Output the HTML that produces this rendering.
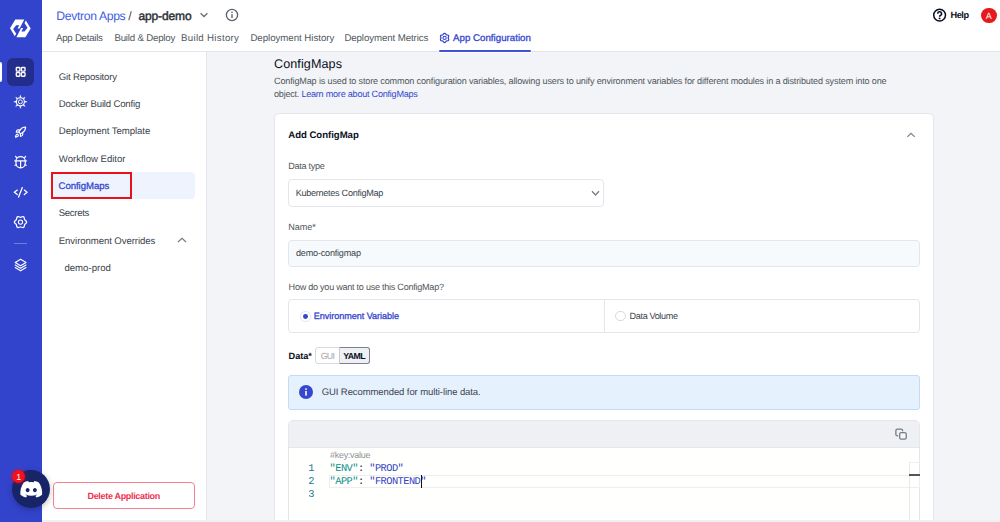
<!DOCTYPE html><html><head><meta charset="utf-8"><style>
html,body{margin:0;padding:0;width:1000px;height:522px;overflow:hidden;background:#f2f4f7;font-family:'Liberation Sans',sans-serif;text-rendering:geometricPrecision;}
.t{position:absolute;white-space:nowrap;}
.b{position:absolute;box-sizing:border-box;}
svg{position:absolute;overflow:visible;}
</style></head><body>
<div class="b" style="left:42px;top:0px;width:958.00px;height:522.00px;background:#f2f4f7"></div>
<div class="b" style="left:42px;top:0px;width:958.00px;height:51.00px;background:#fff"></div>
<div class="b" style="left:42px;top:51px;width:958.00px;height:1.00px;background:#e3e6ea"></div>
<div class="b" style="left:42px;top:52px;width:164.00px;height:468.00px;background:#fff"></div>
<div class="b" style="left:206px;top:52px;width:1.00px;height:468.00px;background:#e3e6ea"></div>
<div class="b" style="left:0px;top:0px;width:42.20px;height:522.00px;background:#3344cc"></div>
<div class="t" style="left:56.30px;top:10px;font-size:12.2px;line-height:12.2px;color:#3f5ee2;font-weight:400;font-family:'Liberation Sans', sans-serif;letter-spacing:-0.341px;">Devtron Apps</div>
<div class="t" style="left:128.20px;top:10px;font-size:12.2px;line-height:12.2px;color:#3b444c;font-weight:400;font-family:'Liberation Sans', sans-serif;">/</div>
<div class="t" style="left:138.40px;top:10px;font-size:12px;line-height:12px;color:#2c2f36;font-weight:400;font-family:'Liberation Sans', sans-serif;letter-spacing:-0.121px;-webkit-text-stroke:0.45px #2c2f36;">app-demo</div>
<svg style="left:200px;top:12px" width="8" height="6" viewBox="0 0 8 6"><path d="M0.6 1.2 L4 4.6 L7.4 1.2" fill="none" stroke="#6b7178" stroke-width="1.35"/></svg>
<svg style="left:225px;top:8px" width="14" height="14" viewBox="0 0 14 14"><circle cx="7" cy="7" r="5.6" fill="none" stroke="#5b6168" stroke-width="1.3"/><path d="M7 6.3 V10" stroke="#5b6168" stroke-width="1.4"/><circle cx="7" cy="4.3" r="0.8" fill="#5b6168"/></svg>
<div class="t" style="left:56.00px;top:34px;font-size:9.7px;line-height:9.7px;color:#51575d;font-weight:400;font-family:'Liberation Sans', sans-serif;letter-spacing:-0.260px;">App Details</div>
<div class="t" style="left:114.40px;top:34px;font-size:9.7px;line-height:9.7px;color:#51575d;font-weight:400;font-family:'Liberation Sans', sans-serif;letter-spacing:-0.200px;">Build &amp; Deploy</div>
<div class="t" style="left:181.00px;top:34px;font-size:9.7px;line-height:9.7px;color:#51575d;font-weight:400;font-family:'Liberation Sans', sans-serif;letter-spacing:0.296px;">Build History</div>
<div class="t" style="left:250.40px;top:34px;font-size:9.7px;line-height:9.7px;color:#51575d;font-weight:400;font-family:'Liberation Sans', sans-serif;letter-spacing:-0.038px;">Deployment History</div>
<div class="t" style="left:344.40px;top:34px;font-size:9.7px;line-height:9.7px;color:#51575d;font-weight:400;font-family:'Liberation Sans', sans-serif;letter-spacing:-0.100px;">Deployment Metrics</div>
<div class="t" style="left:453.00px;top:34px;font-size:9.7px;line-height:9.7px;color:#3647cf;font-weight:400;font-family:'Liberation Sans', sans-serif;letter-spacing:0.022px;-webkit-text-stroke:0.3px #3647cf;">App Configuration</div>
<svg style="left:0;top:0" width="460" height="50" viewBox="0 0 460 50"><path d="M448.15 37.90 L448.24 38.28 L448.44 38.72 L448.66 39.22 L448.75 39.75 L448.63 40.22 L448.28 40.57 L447.77 40.76 L447.23 40.82 L446.75 40.86 L446.38 40.97 L446.09 41.24 L445.81 41.64 L445.49 42.08 L445.08 42.42 L444.60 42.55 L444.12 42.42 L443.71 42.08 L443.39 41.64 L443.11 41.24 L442.83 40.97 L442.45 40.86 L441.97 40.82 L441.43 40.76 L440.92 40.57 L440.57 40.22 L440.45 39.75 L440.54 39.22 L440.76 38.72 L440.96 38.28 L441.05 37.90 L440.96 37.52 L440.76 37.08 L440.54 36.58 L440.45 36.05 L440.57 35.57 L440.92 35.23 L441.43 35.04 L441.97 34.98 L442.45 34.94 L442.83 34.83 L443.11 34.56 L443.39 34.16 L443.71 33.72 L444.12 33.38 L444.60 33.25 L445.08 33.38 L445.49 33.72 L445.81 34.16 L446.09 34.56 L446.38 34.83 L446.75 34.94 L447.23 34.98 L447.77 35.04 L448.28 35.23 L448.63 35.57 L448.75 36.05 L448.66 36.58 L448.44 37.08 L448.24 37.52 Z" fill="none" stroke="#3647cf" stroke-width="1.2" stroke-linejoin="round"/><circle cx="444.6" cy="37.9" r="1.6" fill="none" stroke="#3647cf" stroke-width="1.1"/></svg>
<div class="b" style="left:439px;top:52px;width:92.30px;height:1.00px;background:#fff"></div>
<div class="b" style="left:439px;top:49.8px;width:92.30px;height:2.00px;background:#4153d8;border-radius:1px"></div>
<svg style="left:932px;top:8px" width="15" height="15" viewBox="0 0 15 15"><circle cx="7.6" cy="7.1" r="5.9" fill="none" stroke="#0b0f22" stroke-width="1.5"/><path d="M5.7 5.7 a1.95 1.95 0 1 1 2.7 1.8 c-.55 .3 -.8 .6 -.8 1.2" fill="none" stroke="#0b0f22" stroke-width="1.6"/><circle cx="7.6" cy="10.4" r="0.95" fill="#0b0f22"/></svg>
<div class="t" style="left:950.40px;top:11px;font-size:9.2px;line-height:9.2px;color:#0b0f22;font-weight:700;font-family:'Liberation Sans', sans-serif;letter-spacing:-0.383px;">Help</div>
<div class="b" style="left:981.2px;top:7.9px;width:15.60px;height:15.60px;background:#e6191b;border-radius:50%"></div>
<div class="t" style="left:985.80px;top:12px;font-size:9px;line-height:9px;color:#fff;font-weight:400;font-family:'Liberation Sans', sans-serif;">A</div>
<div class="b" style="left:51.5px;top:172.2px;width:143.50px;height:27.10px;background:#eef3fe;border-radius:4px"></div>
<div class="t" style="left:58.80px;top:73px;font-size:9.6px;line-height:9.6px;color:#3b444c;font-weight:400;font-family:'Liberation Sans', sans-serif;letter-spacing:-0.200px;">Git Repository</div>
<div class="t" style="left:58.80px;top:100px;font-size:9.6px;line-height:9.6px;color:#3b444c;font-weight:400;font-family:'Liberation Sans', sans-serif;letter-spacing:-0.186px;">Docker Build Config</div>
<div class="t" style="left:58.80px;top:127px;font-size:9.6px;line-height:9.6px;color:#3b444c;font-weight:400;font-family:'Liberation Sans', sans-serif;letter-spacing:-0.064px;">Deployment Template</div>
<div class="t" style="left:58.80px;top:155px;font-size:9.6px;line-height:9.6px;color:#3b444c;font-weight:400;font-family:'Liberation Sans', sans-serif;letter-spacing:-0.025px;">Workflow Editor</div>
<div class="t" style="left:58.60px;top:182px;font-size:9.6px;line-height:9.6px;color:#3647cf;font-weight:400;font-family:'Liberation Sans', sans-serif;letter-spacing:-0.061px;-webkit-text-stroke:0.3px #3647cf;">ConfigMaps</div>
<div class="t" style="left:58.80px;top:209px;font-size:9.6px;line-height:9.6px;color:#3b444c;font-weight:400;font-family:'Liberation Sans', sans-serif;letter-spacing:-0.342px;">Secrets</div>
<div class="t" style="left:58.80px;top:237px;font-size:9.6px;line-height:9.6px;color:#3b444c;font-weight:400;font-family:'Liberation Sans', sans-serif;letter-spacing:-0.083px;">Environment Overrides</div>
<div class="t" style="left:64.40px;top:264px;font-size:9.6px;line-height:9.6px;color:#3b444c;font-weight:400;font-family:'Liberation Sans', sans-serif;letter-spacing:0.019px;">demo-prod</div>
<div class="b" style="left:50.7px;top:172.2px;width:81.00px;height:27.10px;border:2px solid #e8121b"></div>
<svg style="left:176.5px;top:237px" width="10" height="6" viewBox="0 0 10 6"><path d="M1 5 L5 1.3 L9 5" fill="none" stroke="#767d84" stroke-width="1.2"/></svg>
<div class="b" style="left:53.2px;top:481.5px;width:141.80px;height:27.20px;border:1.3px solid #f7808f;border-radius:4px;background:#fff"></div>
<div class="t" style="left:87.50px;top:492px;font-size:9px;line-height:9px;color:#f0304f;font-weight:700;font-family:'Liberation Sans', sans-serif;letter-spacing:-0.318px;">Delete Application</div>
<div class="t" style="left:274.00px;top:58px;font-size:12.6px;line-height:12.6px;color:#0b0f22;font-weight:400;font-family:'Liberation Sans', sans-serif;letter-spacing:0.083px;">ConfigMaps</div>
<div class="t" style="left:274.00px;top:77px;font-size:9.1px;line-height:9.1px;color:#51575d;font-weight:400;font-family:'Liberation Sans', sans-serif;letter-spacing:-0.162px;">ConfigMap is used to store common configuration variables, allowing users to unify environment variables for different modules in a distributed system into one</div>
<div class="t" style="left:274.00px;top:90px;font-size:9.1px;line-height:9.1px;color:#51575d;font-weight:400;font-family:'Liberation Sans', sans-serif;letter-spacing:-0.243px;">object. <span style="color:#3647cf">Learn more about ConfigMaps</span></div>
<div class="b" style="left:274px;top:113.2px;width:659.50px;height:426.80px;background:#fff;border:1px solid #e3e6ea;border-radius:5px"></div>
<div class="t" style="left:288.30px;top:131px;font-size:9.6px;line-height:9.6px;color:#0b0f22;font-weight:700;font-family:'Liberation Sans', sans-serif;letter-spacing:-0.033px;">Add ConfigMap</div>
<svg style="left:906.2px;top:131.8px" width="10" height="6" viewBox="0 0 10 6"><path d="M1.3 4.9 L5 1.3 L8.7 4.9" fill="none" stroke="#7d8186" stroke-width="1.2"/></svg>
<div class="t" style="left:288.20px;top:162px;font-size:9.1px;line-height:9.1px;color:#51575d;font-weight:400;font-family:'Liberation Sans', sans-serif;letter-spacing:-0.281px;">Data type</div>
<div class="b" style="left:288px;top:179px;width:315.80px;height:28.30px;background:#fff;border:1px solid #e3e6ea;border-radius:4px"></div>
<div class="t" style="left:295.70px;top:189px;font-size:9.1px;line-height:9.1px;color:#3b444c;font-weight:400;font-family:'Liberation Sans', sans-serif;letter-spacing:-0.284px;">Kubernetes ConfigMap</div>
<svg style="left:590.5px;top:190px" width="9" height="6" viewBox="0 0 9 6"><path d="M1 1.2 L4.5 5 L8 1.2" fill="none" stroke="#767d84" stroke-width="1.3"/></svg>
<div class="t" style="left:288.20px;top:223px;font-size:9.1px;line-height:9.1px;color:#51575d;font-weight:400;font-family:'Liberation Sans', sans-serif;letter-spacing:-0.025px;">Name*</div>
<div class="b" style="left:288px;top:240px;width:631.70px;height:27.00px;background:#f7fafc;border:1px solid #e3e6ea;border-radius:4px"></div>
<div class="t" style="left:296.00px;top:249px;font-size:9.1px;line-height:9.1px;color:#3b444c;font-weight:400;font-family:'Liberation Sans', sans-serif;letter-spacing:-0.215px;">demo-configmap</div>
<div class="t" style="left:288.60px;top:283px;font-size:9.1px;line-height:9.1px;color:#51575d;font-weight:400;font-family:'Liberation Sans', sans-serif;letter-spacing:-0.268px;">How do you want to use this ConfigMap?</div>
<div class="b" style="left:288px;top:299.3px;width:631.70px;height:33.90px;background:#fff;border:1px solid #e3e6ea;border-radius:4px"></div>
<div class="b" style="left:604px;top:299.3px;width:1.00px;height:33.90px;background:#e3e6ea"></div>
<div class="b" style="left:300.2px;top:311.3px;width:10.40px;height:10.40px;border:1px solid #e3e6ea;border-radius:50%;background:#fff"></div>
<div class="b" style="left:303px;top:314.1px;width:4.80px;height:4.80px;background:#3647cf;border-radius:50%"></div>
<div class="t" style="left:313.80px;top:312px;font-size:9.1px;line-height:9.1px;color:#3647cf;font-weight:400;font-family:'Liberation Sans', sans-serif;letter-spacing:-0.050px;-webkit-text-stroke:0.3px #3647cf;">Environment Variable</div>
<div class="b" style="left:615.3px;top:310.6px;width:10.70px;height:10.70px;border:1px solid #d6dade;border-radius:50%;background:#fff"></div>
<div class="t" style="left:629.60px;top:312px;font-size:9.1px;line-height:9.1px;color:#3b444c;font-weight:400;font-family:'Liberation Sans', sans-serif;letter-spacing:-0.370px;">Data Volume</div>
<div class="t" style="left:288.60px;top:352px;font-size:9.2px;line-height:9.2px;color:#0b0f22;font-weight:700;font-family:'Liberation Sans', sans-serif;letter-spacing:-0.062px;">Data*</div>
<div class="b" style="left:315.2px;top:346.9px;width:55.10px;height:17.50px;border:1px solid #d6dade;border-radius:3px;background:#fff"></div>
<div class="b" style="left:338.9px;top:346.9px;width:31.40px;height:17.50px;border:1px solid #7b7f8f;border-left-color:#c9ccd4;border-radius:0 3px 3px 0;background:#eef0f4"></div>
<div class="t" style="left:320.70px;top:352px;font-size:8.8px;line-height:8.8px;color:#a0a5aa;font-weight:400;font-family:'Liberation Sans', sans-serif;letter-spacing:-0.675px;">GUI</div>
<div class="t" style="left:343.20px;top:352px;font-size:8.8px;line-height:8.8px;color:#0b0f22;font-weight:700;font-family:'Liberation Sans', sans-serif;letter-spacing:-0.600px;">YAML</div>
<div class="b" style="left:288.3px;top:375.2px;width:631.40px;height:34.60px;background:#e6f1fe;border:1px solid #c4dbfa;border-radius:3px"></div>
<svg style="left:298.6px;top:385px" width="14" height="14" viewBox="0 0 14 14"><circle cx="7" cy="7" r="7" fill="#3647cf"/><rect x="6.2" y="6" width="1.6" height="4.6" fill="#fff"/><circle cx="7" cy="4.1" r="0.95" fill="#fff"/></svg>
<div class="t" style="left:321.70px;top:388px;font-size:9.5px;line-height:9.5px;color:#3b444c;font-weight:400;font-family:'Liberation Sans', sans-serif;letter-spacing:-0.089px;">GUI Recommended for multi-line data.</div>
<div class="b" style="left:288.4px;top:420.4px;width:631.30px;height:119.60px;background:#fffffd;border:1px solid #e3e6ea;border-radius:5px"></div>
<div class="b" style="left:289.4px;top:421.4px;width:629.30px;height:26.00px;background:#eef0f4;border-radius:4px 4px 0 0"></div>
<div class="b" style="left:289.4px;top:447.4px;width:629.30px;height:1.00px;background:#e3e6ea"></div>
<svg style="left:0;top:0" width="920" height="445" viewBox="0 0 920 445"><rect x="895.85" y="429.05" width="6.8" height="6.8" rx="1.6" fill="none" stroke="#767d84" stroke-width="1.3"/><rect x="899.65" y="432.65" width="6.6" height="6.5" rx="1.6" fill="#f4f5f8" stroke="#eef0f4" stroke-width="3"/><rect x="899.65" y="432.65" width="6.6" height="6.5" rx="1.6" fill="#f4f5f8" stroke="#767d84" stroke-width="1.3"/></svg>
<div class="t" style="left:330.00px;top:451px;font-size:9px;line-height:9px;color:#8e9297;font-weight:400;font-family:'Liberation Sans', sans-serif;letter-spacing:-0.294px;">#key:value</div>
<div class="t" style="left:308.30px;top:464px;font-size:10.4px;line-height:10.4px;color:#237893;font-weight:400;font-family:'Liberation Mono', monospace;">1</div>
<div class="t" style="left:308.30px;top:477px;font-size:10.4px;line-height:10.4px;color:#237893;font-weight:400;font-family:'Liberation Mono', monospace;">2</div>
<div class="t" style="left:308.30px;top:490px;font-size:10.4px;line-height:10.4px;color:#237893;font-weight:400;font-family:'Liberation Mono', monospace;">3</div>
<div class="b" style="left:329px;top:475.2px;width:590.70px;height:12.40px;border:1px solid #eeeeee"></div>
<div class="t" style="left:329.60px;top:464px;font-size:10.4px;line-height:10.4px;color:#3b444c;font-weight:400;font-family:'Liberation Mono', monospace;letter-spacing:-0.57px;"><span style="color:#0f8f8a">"ENV"</span><span style="color:#1d1d1d">:</span> <span style="color:#3442c4">"PROD"</span></div>
<div class="t" style="left:329.60px;top:477px;font-size:10.4px;line-height:10.4px;color:#3b444c;font-weight:400;font-family:'Liberation Mono', monospace;letter-spacing:-0.57px;"><span style="color:#0f8f8a">"APP"</span><span style="color:#1d1d1d">:</span> <span style="color:#3442c4">"FRONTEND"</span></div>
<div class="b" style="left:421.1px;top:475.3px;width:1.20px;height:12.70px;background:#111"></div>
<div class="b" style="left:909px;top:462px;width:1.00px;height:58.00px;background:#e8e8e8"></div>
<div class="b" style="left:909px;top:462px;width:10.70px;height:1.00px;background:#eeeeee"></div>
<div class="b" style="left:909px;top:474px;width:10.70px;height:1.50px;background:#555"></div>
<div class="b" style="left:42.2px;top:520px;width:957.80px;height:2.00px;background:#eef0f4"></div>
<div class="b" style="left:7px;top:58.4px;width:27.00px;height:27.20px;background:#232e8c;border-radius:6px"></div>
<div class="b" style="left:0px;top:62px;width:1.60px;height:20.00px;background:#fff;border-radius:0 2px 2px 0"></div>
<svg style="left:0;top:0" width="42" height="90" viewBox="0 0 42 90"><g fill="none" stroke="#fff" stroke-width="1.35"><rect x="16.3" y="67.5" width="3.6" height="3.6" rx="0.7"/><rect x="21.4" y="67.5" width="3.6" height="3.6" rx="0.7"/><rect x="16.3" y="72.6" width="3.6" height="3.6" rx="0.7"/><rect x="21.4" y="72.6" width="3.6" height="3.6" rx="0.7"/></g></svg>
<svg style="left:0px;top:0px" width="42" height="45" viewBox="0 0 42 45"><path d="M10.00 28.30 L15.30 19.40 L24.30 19.40 L19.60 28.60 L17.50 28.60 L19.30 25.20 L16.20 25.20 L13.20 28.90 L16.20 33.80 L14.80 36.20 Z M30.70 28.40 L25.40 37.30 L16.40 37.30 L21.10 28.10 L23.20 28.10 L21.40 31.50 L24.50 31.50 L27.50 27.80 L24.50 22.90 L25.90 20.50 Z" fill="#fff"/></svg>
<svg style="left:0;top:0" width="42" height="280" viewBox="0 0 42 280"><circle cx="20.4" cy="101.8" r="4.0" fill="none" stroke="#fff" stroke-width="1.1"/><circle cx="20.4" cy="101.8" r="2.0" fill="none" stroke="#fff" stroke-width="0.95"/><path d="M24.73 101.04 L27.10 101.80 L24.73 102.56 Z M24.00 104.32 L25.14 106.54 L22.92 105.40 Z M21.16 106.13 L20.40 108.50 L19.64 106.13 Z M17.88 105.40 L15.66 106.54 L16.80 104.32 Z M16.07 102.56 L13.70 101.80 L16.07 101.04 Z M16.80 99.28 L15.66 97.06 L17.88 98.20 Z M19.64 97.47 L20.40 95.10 L21.16 97.47 Z M22.92 98.20 L25.14 97.06 L24.00 99.28 Z " fill="#fff" stroke="#fff" stroke-width="0.35" stroke-linejoin="round"/><g transform="translate(14.18 125.94) scale(0.52)" fill="none" stroke="#fff" stroke-width="2.2" stroke-linecap="round" stroke-linejoin="round"><path d="M4.5 16.5c-1.5 1.26-2 5-2 5s3.74-.5 5-2c.71-.84.7-2.13-.09-2.91a2.18 2.18 0 0 0-2.91-.09z"/><path d="m12 15-3-3a22 22 0 0 1 2-3.95A12.88 12.88 0 0 1 22 2c0 2.72-.78 7.5-6 11a22.350 22.350 0 0 1-4 2z"/><path d="M9 12H4s.55-3.03 2-4c1.62-1.08 5 0 5 0"/><path d="M12 15v5s3.030-.55 4-2c1.08-1.62 0-5 0-5"/></g><g fill="none" stroke="#fff" stroke-width="1.2" stroke-linecap="round" stroke-linejoin="round"><path d="M16 160.8 a4.6 4.2 0 0 1 9.2 0 V163.5 a4.6 4.3 0 0 1 -9.2 0 Z"/><path d="M16 160.9 H25.2 M20.6 160.9 V167.6 M16.6 157.6 L15.6 156.3 M24.6 157.6 L25.6 156.3 M16 161.2 L14.8 160.9 M25.2 161.2 L26.4 160.9 M16.2 164.8 L15 165.3 M25 164.8 L26.2 165.3"/></g><g fill="none" stroke="#fff" stroke-width="1.3" stroke-linecap="round" stroke-linejoin="round"><path d="M17.3 190.1 L14.3 192.3 L17.3 194.5 M24.3 190.1 L27.1 192.3 L24.3 194.5 M22.3 187.6 L18.6 197.1"/></g><path d="M26.60 222.10 L26.44 222.72 L26.03 223.27 L25.49 223.72 L25.00 224.10 L24.66 224.50 L24.48 224.99 L24.40 225.61 L24.28 226.30 L24.01 226.93 L23.55 227.38 L22.93 227.56 L22.25 227.47 L21.59 227.23 L21.01 227.00 L20.50 226.90 L19.99 227.00 L19.41 227.23 L18.75 227.47 L18.07 227.56 L17.45 227.38 L16.99 226.93 L16.72 226.30 L16.60 225.61 L16.52 224.99 L16.34 224.50 L16.00 224.10 L15.51 223.72 L14.97 223.27 L14.56 222.72 L14.40 222.10 L14.56 221.48 L14.97 220.93 L15.51 220.48 L16.00 220.10 L16.34 219.70 L16.52 219.21 L16.60 218.59 L16.72 217.90 L16.99 217.27 L17.45 216.82 L18.07 216.64 L18.75 216.73 L19.41 216.97 L19.99 217.20 L20.50 217.30 L21.01 217.20 L21.59 216.97 L22.25 216.73 L22.93 216.64 L23.55 216.82 L24.01 217.27 L24.28 217.90 L24.40 218.59 L24.48 219.21 L24.66 219.70 L25.00 220.10 L25.49 220.48 L26.03 220.93 L26.44 221.48 Z" fill="none" stroke="#fff" stroke-width="1.25" stroke-linejoin="round"/><circle cx="20.5" cy="222.1" r="2.1" fill="none" stroke="#fff" stroke-width="1.1"/><g fill="none" stroke="#fff" stroke-width="1.15" stroke-linejoin="round" stroke-linecap="round"><path d="M20.6 259.3 L26 262.5 L20.6 265.7 L15.2 262.5 Z M15.2 265 L20.6 268.2 L26 265 M15.2 267.6 L20.6 270.8 L26 267.6"/></g></svg>
<div class="b" style="left:13.6px;top:243px;width:13.90px;height:1.00px;background:rgba(255,255,255,0.3)"></div>
<div class="b" style="left:12.1px;top:470px;width:38.00px;height:38.00px;background:#172567;border-radius:50%;box-shadow:0 2px 6px rgba(0,0,0,0.25)"></div>
<svg style="left:20px;top:481px" width="22.5" height="16.5" viewBox="0 0 127 96"><path fill="#fff" d="M107.7 8.07A105.15 105.15 0 0 0 81.47 0a72.06 72.06 0 0 0-3.36 6.83 97.68 97.68 0 0 0-29.11 0A72.37 72.37 0 0 0 45.64 0a105.89 105.89 0 0 0-26.25 8.09C2.79 32.65-1.71 56.6.54 80.21a105.73 105.73 0 0 0 32.17 16.15 77.7 77.7 0 0 0 6.89-11.11 68.42 68.42 0 0 1-10.85-5.18c.91-.66 1.8-1.34 2.66-2a75.57 75.57 0 0 0 64.32 0c.87.71 1.76 1.39 2.66 2a68.68 68.68 0 0 1-10.87 5.19 77 77 0 0 0 6.89 11.1 105.25 105.25 0 0 0 32.19-16.14c2.64-27.38-4.51-51.11-18.9-72.15zM42.45 65.69C36.18 65.69 31 60 31 53s5-12.74 11.43-12.74S54 46 53.89 53s-5.05 12.69-11.44 12.69zm42.24 0C78.41 65.69 73.25 60 73.25 53s5-12.74 11.44-12.74S96.23 46 96.12 53s-5.04 12.69-11.43 12.69z"/></svg>
<div class="b" style="left:12.1px;top:470px;width:12.90px;height:13.00px;background:#f5101a;border-radius:50%;box-shadow:0 0 4px rgba(255,0,0,0.6)"></div>
<div class="t" style="left:16.30px;top:473px;font-size:8.8px;line-height:8.8px;color:#fff;font-weight:400;font-family:'Liberation Sans', sans-serif;">1</div>
</body></html>
